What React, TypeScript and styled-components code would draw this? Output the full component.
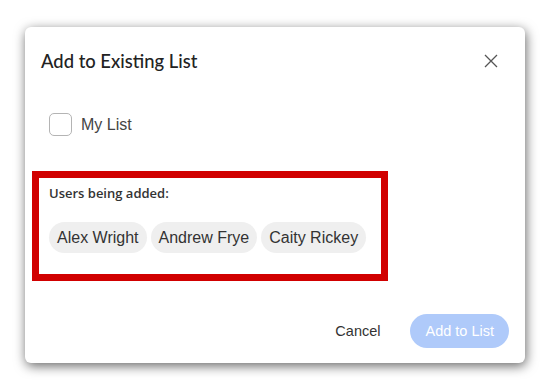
import styled, { createGlobalStyle } from "styled-components";

const GlobalStyle = createGlobalStyle`
    html, body {
        margin: 0;
        padding: 0;
        background: #ffffff;
    }
    * {
        box-sizing: border-box;
    }
`;

const Page = styled.div`
    width: 553px;
    height: 392px;
    padding: 27px 0 0 25px;
    background: #ffffff;
`;

const Dialog = styled.div`
    width: 500px;
    height: 336px;
    display: flex;
    flex-direction: column;
    background: #ffffff;
    border-radius: 6px;
    box-shadow: 1px 3px 12px rgba(0, 0, 0, 0.6);
    font-family: "Liberation Sans", Arial, sans-serif;
    color: #333333;
`;

const Header = styled.div`
    display: flex;
    align-items: center;
    justify-content: space-between;
    padding: 20px 22px 0 16px;
    height: 48px;
`;

const Title = styled.h2`
    margin: 0;
    font-family: "Lato", "Open Sans", sans-serif;
    font-size: 18.4px;
    line-height: 28px;
    font-weight: 500;
    color: #222222;
`;

const CloseButton = styled.button`
    width: 24px;
    height: 24px;
    padding: 0;
    border: none;
    background: transparent;
    display: flex;
    align-items: center;
    justify-content: center;
    cursor: pointer;
`;

const CheckRow = styled.label`
    display: flex;
    align-items: center;
    gap: 9px;
    margin: 38px 0 0 24px;
    height: 23px;
    font-size: 16px;
    color: #444444;
`;

const CheckBox = styled.span`
    width: 23px;
    height: 23px;
    border: 1px solid #b4b4b4;
    border-radius: 5px;
    background: #ffffff;
`;

const UsersSection = styled.section`
    margin: 35px 0 0 7px;
    width: 356px;
    height: 110px;
    border: 7px solid #d10000;
    padding: 7px 10px 0 10px;
`;

const SectionLabel = styled.div`
    font-family: "Open Sans", "Lato", sans-serif;
    font-size: 13px;
    font-weight: 600;
    line-height: 16px;
    color: #333333;
`;

const ChipRow = styled.div`
    display: flex;
    gap: 4px;
    margin-top: 21px;
`;

const Chip = styled.span`
    height: 31px;
    padding: 0 8px;
    display: flex;
    align-items: center;
    border-radius: 16px;
    background: #efefef;
    font-size: 16px;
    color: #333333;
`;

const Footer = styled.div`
    display: flex;
    justify-content: flex-end;
    align-items: center;
    gap: 14px;
    margin-top: auto;
    padding: 0 16px 15px 0;
`;

const FooterButton = styled.button<{ $primary?: boolean }>`
    height: 34px;
    padding: 0 ${(p) => (p.$primary ? "15px" : "16px")};
    border: none;
    border-radius: 17px;
    font-family: "Liberation Sans", Arial, sans-serif;
    font-size: 14.5px;
    color: ${(p) => (p.$primary ? "#ffffff" : "#333333")};
    background: ${(p) => (p.$primary ? "#afcafa" : "transparent")};
    cursor: pointer;
`;

const users = ["Alex Wright", "Andrew Frye", "Caity Rickey"];

const App = () => {
    return (
        <>
            <GlobalStyle />
            <Page>
                <Dialog>
                    <Header>
                        <Title>Add to Existing List</Title>
                        <CloseButton aria-label="Close">
                            <svg width="14" height="14" viewBox="0 0 14 14">
                                <path d="M1 1 L13 13 M13 1 L1 13" stroke="#555555" strokeWidth="1.3" fill="none" />
                            </svg>
                        </CloseButton>
                    </Header>

                    <CheckRow>
                        <CheckBox />
                        My List
                    </CheckRow>

                    <UsersSection>
                        <SectionLabel>Users being added:</SectionLabel>
                        <ChipRow>
                            {users.map((u, idx) => {
                                return <Chip key={idx}>{u}</Chip>
                            })}
                        </ChipRow>
                    </UsersSection>

                    <Footer>
                        <FooterButton>Cancel</FooterButton>
                        <FooterButton $primary>Add to List</FooterButton>
                    </Footer>
                </Dialog>
            </Page>
        </>
    );
}

export default App;
